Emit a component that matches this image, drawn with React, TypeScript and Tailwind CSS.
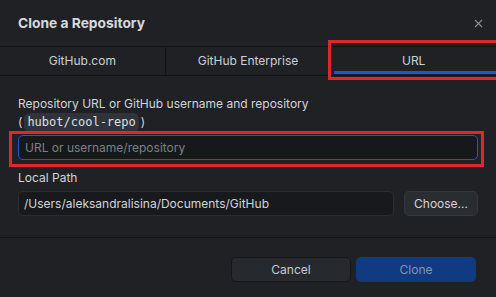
import { X } from "lucide-react";

const tabs = ["GitHub.com", "GitHub Enterprise", "URL"];

export default function App() {
  const selected = "URL";

  return (
    <div
      className="relative h-[297px] w-[496px] overflow-hidden bg-[#1f2125] text-[#d2d5da]"
      style={{ fontFamily: "Inter, 'Noto Sans', sans-serif" }}
    >
      {/* header */}
      <div className="flex h-[46px] items-center justify-between pl-[18px] pr-[11px]">
        <h1 className="text-[13.8px] font-bold text-[#d6d9de]">Clone a Repository</h1>
        <X className="size-[13px] text-[#8b9096]" strokeWidth={2} />
      </div>

      {/* tabs */}
      <div className="flex h-[30px] border-y border-[#111315]">
        {tabs.map((tab, i) => (
          <div
            key={tab}
            className={`relative flex flex-1 items-center justify-center text-[12px] text-[#cdd0d5] ${
              i < tabs.length - 1 ? "border-r border-[#111315]" : ""
            }`}
          >
            {tab}
            {tab === selected && (
              <div className="absolute bottom-[1px] left-[3px] right-0 h-[3px] bg-[#1d57d6]" />
            )}
          </div>
        ))}
      </div>

      {/* form */}
      <div className="px-[18px] pt-[19px] text-[12px]">
        <div className="leading-[18px] text-[#d2d5da]">
          Repository URL or GitHub username and repository
        </div>
        <div className="flex h-[18px] items-center">
          (
          <code
            className="mx-[2px] rounded-[6px] bg-[#30343a] px-[3px] py-[1px] text-[12px] leading-[17px] text-[#dde0e4]"
            style={{ fontFamily: "'DejaVu Sans Mono', monospace" }}
          >
            hubot/cool-repo
          </code>
          )
        </div>

        <input
          className="mt-[4px] h-[25px] w-full rounded-[5px] border border-[#1d57d6] bg-[#16181b] px-[6px] text-[12px] text-[#d2d5da] outline-none placeholder:text-[#7c8188]"
          placeholder="URL or username/repository"
        />

        <div className="mt-[9px] leading-[18px]">Local Path</div>
        <div className="mt-[4px] flex gap-[10px]">
          <div className="flex h-[25px] flex-1 items-center rounded-[5px] border border-[#2a2d32] bg-[#17191c] px-[5px] text-[#d2d5da]">
            /Users/aleksandralisina/Documents/GitHub
          </div>
          <button className="h-[25px] w-[74px] rounded-[5px] border border-[#33373d] bg-[#292c31] text-[#d2d5da]">
            Choose…
          </button>
        </div>
      </div>

      {/* footer */}
      <div className="mt-[21px] border-t border-[#111315]">
        <div className="flex justify-end gap-[5px] pr-[20px] pt-[19px] text-[12px]">
          <button className="h-[25px] w-[120px] rounded-[5px] border border-[#141618] bg-[#26292d] text-[#c9ccd1]">
            Cancel
          </button>
          <button className="h-[25px] w-[120px] rounded-[5px] bg-[#103a82] text-[#8795ad]">
            Clone
          </button>
        </div>
      </div>

      {/* annotation boxes */}
      <div className="absolute left-[328px] top-[40px] h-[40px] w-[172px] border-[3px] border-[#e0282a]" />
      <div className="absolute left-[9px] top-[131px] h-[36px] w-[475px] border-[3px] border-[#e0282a]" />
    </div>
  );
}
